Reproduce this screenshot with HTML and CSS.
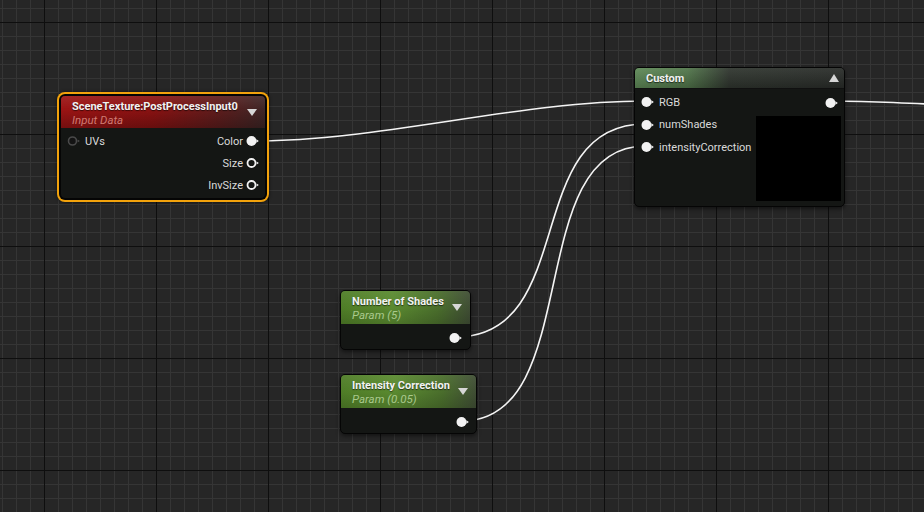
FILE: index.html
```html
<!DOCTYPE html>
<html>
<head>
<meta charset="utf-8">
<link rel="stylesheet" href="styles.css">
</head>
<body>
<div class="graph">
  <svg class="wires" width="924" height="512" viewBox="0 0 924 512">
    <path d="M 255 141 C 380 141, 520 101, 645 101"/>
    <path d="M 455 337 C 580 337, 520 124, 645 124"/>
    <path d="M 462 421 C 585 421, 522 146, 645 146"/>
    <path d="M 830 101 C 880 101, 890 103, 930 104"/>
  </svg>

  <div class="node node-scene selected">
    <div class="head head-red">
      <div class="titles">
        <div class="title">SceneTexture:PostProcessInput0</div>
        <div class="sub sub-red">Input Data</div>
      </div>
      <span class="tri down"></span>
    </div>
    <div class="body body-scene">
      <div class="row">
        <div class="pin-in">
          <svg class="pin" width="15" height="12" viewBox="0 0 15 12"><circle cx="5.5" cy="6" r="4" fill="#141414" stroke="#4a4a4a" stroke-width="1.6"/><polygon points="10.6,4.4 12.8,6 10.6,7.6" fill="#4a4a4a"/></svg>
          <span class="lbl">UVs</span>
        </div>
        <div class="pin-out">
          <span class="lbl">Color</span>
          <svg class="pin" width="15" height="12" viewBox="0 0 15 12"><circle cx="5.5" cy="6" r="5" fill="#f2f2f2"/><polygon points="10.4,4.2 12.8,6 10.4,7.8" fill="#f2f2f2"/></svg>
        </div>
      </div>
      <div class="row end">
        <div class="pin-out">
          <span class="lbl">Size</span>
          <svg class="pin" width="15" height="12" viewBox="0 0 15 12"><circle cx="5.5" cy="6" r="4" fill="none" stroke="#f2f2f2" stroke-width="1.8"/><polygon points="10.6,4.4 12.8,6 10.6,7.6" fill="#f2f2f2"/></svg>
        </div>
      </div>
      <div class="row end">
        <div class="pin-out">
          <span class="lbl">InvSize</span>
          <svg class="pin" width="15" height="12" viewBox="0 0 15 12"><circle cx="5.5" cy="6" r="4" fill="none" stroke="#f2f2f2" stroke-width="1.8"/><polygon points="10.6,4.4 12.8,6 10.6,7.6" fill="#f2f2f2"/></svg>
        </div>
      </div>
    </div>
  </div>

  <div class="node node-custom">
    <div class="head head-custom">
      <div class="title">Custom</div>
      <span class="tri up"></span>
    </div>
    <div class="body body-custom">
      <div class="col-in">
        <div class="row">
          <div class="pin-in">
            <svg class="pin" width="15" height="12" viewBox="0 0 15 12"><circle cx="5.5" cy="6" r="5" fill="#f2f2f2"/><polygon points="10.4,4.2 12.8,6 10.4,7.8" fill="#f2f2f2"/></svg>
            <span class="lbl">RGB</span>
          </div>
        </div>
        <div class="row">
          <div class="pin-in">
            <svg class="pin" width="15" height="12" viewBox="0 0 15 12"><circle cx="5.5" cy="6" r="5" fill="#f2f2f2"/><polygon points="10.4,4.2 12.8,6 10.4,7.8" fill="#f2f2f2"/></svg>
            <span class="lbl">numShades</span>
          </div>
        </div>
        <div class="row">
          <div class="pin-in">
            <svg class="pin" width="15" height="12" viewBox="0 0 15 12"><circle cx="5.5" cy="6" r="5" fill="#f2f2f2"/><polygon points="10.4,4.2 12.8,6 10.4,7.8" fill="#f2f2f2"/></svg>
            <span class="lbl">intensityCorrection</span>
          </div>
        </div>
      </div>
      <div class="col-out">
        <div class="row end">
          <svg class="pin" width="15" height="12" viewBox="0 0 15 12"><circle cx="5.5" cy="6" r="5" fill="#f2f2f2"/><polygon points="10.4,4.2 12.8,6 10.4,7.8" fill="#f2f2f2"/></svg>
        </div>
        <div class="preview"></div>
      </div>
    </div>
  </div>

  <div class="node node-param node-shades">
    <div class="head head-green">
      <div class="titles">
        <div class="title">Number of Shades</div>
        <div class="sub sub-green">Param (5)</div>
      </div>
      <span class="tri down"></span>
    </div>
    <div class="body body-param">
      <svg class="pin" width="15" height="12" viewBox="0 0 15 12"><circle cx="5.5" cy="6" r="5" fill="#f2f2f2"/><polygon points="10.4,4.2 12.8,6 10.4,7.8" fill="#f2f2f2"/></svg>
    </div>
  </div>

  <div class="node node-param node-intensity">
    <div class="head head-green">
      <div class="titles">
        <div class="title">Intensity Correction</div>
        <div class="sub sub-green">Param (0.05)</div>
      </div>
      <span class="tri down"></span>
    </div>
    <div class="body body-param">
      <svg class="pin" width="15" height="12" viewBox="0 0 15 12"><circle cx="5.5" cy="6" r="5" fill="#f2f2f2"/><polygon points="10.4,4.2 12.8,6 10.4,7.8" fill="#f2f2f2"/></svg>
    </div>
  </div>
</div>
</body>
</html>
```

FILE: styles.css
```css
html, body {
  margin: 0;
  padding: 0;
  width: 924px;
  height: 512px;
  overflow: hidden;
  background: #262626;
  font-family: Roboto, "Liberation Sans", sans-serif;
}

.graph {
  position: relative;
  width: 924px;
  height: 512px;
  background-color: #262626;
  background-image:
    linear-gradient(to right, #0e0e0e 0, #0e0e0e 1px, transparent 1px),
    linear-gradient(to bottom, #0e0e0e 0, #0e0e0e 1px, transparent 1px),
    linear-gradient(to right, #353535 0, #353535 1px, transparent 1px),
    linear-gradient(to bottom, #353535 0, #353535 1px, transparent 1px);
  background-size: 112px 112px, 112px 112px, 14px 14px, 14px 14px;
  background-position: 44px 0, 0 22px, 2px 0, 0 8px;
}

.wires {
  position: absolute;
  left: 0;
  top: 0;
}

.wires path {
  fill: none;
  stroke: #f4f4f4;
  stroke-width: 1.6;
}

.node {
  position: absolute;
  box-sizing: border-box;
  border: 1px solid #050505;
  border-radius: 5px;
  background: #141614;
  box-shadow: 0 2px 4px rgba(0, 0, 0, 0.5);
  display: flex;
  flex-direction: column;
  overflow: hidden;
}

.node.selected {
  box-shadow: 0 0 0 1px #050505, 0 0 0 3px #f2a20c, 0 0 3px 4px rgba(0, 0, 0, 0.35);
}

.node-scene {
  left: 60px;
  top: 95px;
  width: 206px;
  height: 104px;
}

.node-custom {
  left: 634px;
  top: 67px;
  width: 211px;
  height: 140px;
}

.node-shades {
  left: 340px;
  top: 290px;
  width: 131px;
  height: 60px;
}

.node-intensity {
  left: 340px;
  top: 374px;
  width: 137px;
  height: 60px;
}

.head {
  display: flex;
  align-items: center;
  justify-content: space-between;
  color: #f2f2f2;
  flex: none;
}

.title {
  font-size: 11px;
  font-weight: bold;
  line-height: 13px;
  text-shadow: 0 1px 1px rgba(0, 0, 0, 0.6);
  white-space: nowrap;
}

.sub {
  font-size: 11.5px;
  font-style: italic;
  line-height: 14px;
  white-space: nowrap;
}

.sub-red {
  color: #d07a72;
}

.sub-green {
  color: #a9c98c;
}

.head-red {
  height: 32px;
  padding: 0 6px 0 11px;
  background:
    linear-gradient(to bottom, rgba(255, 255, 255, 0.08), rgba(0, 0, 0, 0) 40%, rgba(0, 0, 0, 0.25)),
    linear-gradient(to right, #9c1414 0%, #8a1212 45%, #5a1e1e 80%, #3e2626 100%);
}

.head-red .titles {
  padding-top: 2px;
}

.head-custom {
  height: 20px;
  padding: 0 2px 0 11px;
  background:
    linear-gradient(to bottom, rgba(255, 255, 255, 0.06), rgba(0, 0, 0, 0.2)),
    linear-gradient(to right, #5f8a58 0%, #52774b 25%, #30362f 45%, #2a2d2a 100%);
  border-bottom: 1px solid #101010;
}

.head-green {
  height: 33px;
  padding: 0 6px 0 11px;
  background:
    linear-gradient(to bottom, rgba(255, 255, 255, 0.06), rgba(0, 0, 0, 0) 50%, rgba(0, 0, 0, 0.15)),
    linear-gradient(to right, #4f7d27 0%, #5a8a30 40%, #4a6e2c 75%, #3f4d34 100%);
}

.head-green .titles {
  padding-top: 1px;
}

.tri {
  width: 0;
  height: 0;
  border-left: 5px solid transparent;
  border-right: 5px solid transparent;
  margin-right: 2px;
}

.tri.down {
  border-top: 7px solid #d6d6d6;
}

.tri.up {
  border-bottom: 8px solid #d6d6d6;
  margin-right: 3px;
}

.body {
  flex: 1;
}

.row {
  display: flex;
  align-items: center;
  justify-content: space-between;
  height: 22px;
}

.row.end {
  justify-content: flex-end;
}

.pin-in,
.pin-out {
  display: flex;
  align-items: center;
}

.pin {
  display: block;
  flex: none;
}

.lbl {
  font-size: 11px;
  color: #dadada;
  white-space: nowrap;
}

.pin-in .lbl {
  margin-left: 3px;
}

.pin-out .lbl {
  margin-right: 3px;
}

.body-scene {
  padding: 2px 4px 0 6px;
}

.body-custom {
  display: flex;
  justify-content: space-between;
  padding: 2px 3px 0 6px;
}

.col-in {
  display: flex;
  flex-direction: column;
}

.col-in .row {
  height: 22.5px;
}

.col-out {
  display: flex;
  flex-direction: column;
  align-items: flex-end;
}

.col-out .row {
  height: 23px;
  margin-right: 1px;
}

.preview {
  width: 85px;
  height: 85px;
  background: #000;
  margin-top: 2px;
}

.body-param {
  display: flex;
  align-items: center;
  justify-content: flex-end;
  padding-right: 6px;
  padding-top: 2px;
}

.node-intensity .body-param {
  padding-right: 5px;
}
```
